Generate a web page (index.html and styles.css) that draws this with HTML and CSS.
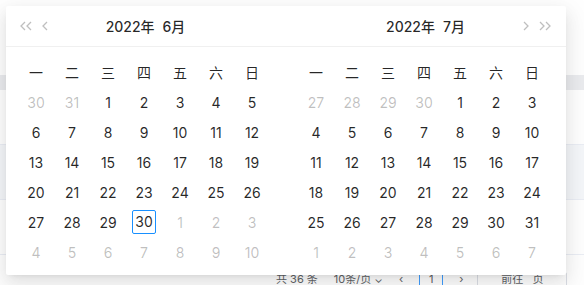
FILE: index.html
```html
<!DOCTYPE html>
<html lang="zh-CN">

<head>
    <meta charset="UTF-8">
    <meta name="viewport" content="width=device-width, initial-scale=1.0">
    <title>日期范围选择</title>
    <link rel="stylesheet" href="styles.css">
</head>

<body>
    <div class="page">
        <div class="table">
            <div class="table-head"></div>
            <div class="table-row"></div>
            <div class="table-row hover"></div>
            <div class="table-row"></div>
        </div>
        <div class="pager">
            <span class="pager-total">共 36 条</span>
            <span class="pager-size">10条/页 ⌄</span>
            <span class="pager-arrow">‹</span>
            <span class="pager-item active">1</span>
            <span class="pager-arrow">›</span>
            <span class="pager-jump">前往 &nbsp; 页</span>
        </div>
    </div>

    <div class="picker-dropdown">
        <div class="panel">
            <div class="panel-header">
                <div class="nav">
                    <button class="nav-btn">
                        <svg width="12" height="10" viewBox="0 0 12 10"><path d="M5 1 1 5l4 4M11 1 7 5l4 4" /></svg>
                    </button>
                    <button class="nav-btn">
                        <svg width="6" height="10" viewBox="0 0 6 10"><path d="M5 1 1 5l4 4" /></svg>
                    </button>
                </div>
                <div class="panel-title"><span>2022年</span><span>6月</span></div>
                <div class="nav"></div>
            </div>
            <div class="panel-body">
                <div class="week">
                    <span>一</span><span>二</span><span>三</span><span>四</span><span>五</span><span>六</span><span>日</span>
                </div>
                <div class="days">
                    <span class="out">30</span><span class="out">31</span><span>1</span><span>2</span><span>3</span><span>4</span><span>5</span>
                    <span>6</span><span>7</span><span>8</span><span>9</span><span>10</span><span>11</span><span>12</span>
                    <span>13</span><span>14</span><span>15</span><span>16</span><span>17</span><span>18</span><span>19</span>
                    <span>20</span><span>21</span><span>22</span><span>23</span><span>24</span><span>25</span><span>26</span>
                    <span>27</span><span>28</span><span>29</span><span class="today"><i>30</i></span><span class="out">1</span><span class="out">2</span><span class="out">3</span>
                    <span class="out">4</span><span class="out">5</span><span class="out">6</span><span class="out">7</span><span class="out">8</span><span class="out">9</span><span class="out">10</span>
                </div>
            </div>
        </div>
        <div class="panel">
            <div class="panel-header">
                <div class="nav"></div>
                <div class="panel-title"><span>2022年</span><span>7月</span></div>
                <div class="nav nav-right">
                    <button class="nav-btn">
                        <svg width="6" height="10" viewBox="0 0 6 10"><path d="M1 1l4 4-4 4" /></svg>
                    </button>
                    <button class="nav-btn">
                        <svg width="12" height="10" viewBox="0 0 12 10"><path d="M1 1l4 4-4 4M7 1l4 4-4 4" /></svg>
                    </button>
                </div>
            </div>
            <div class="panel-body">
                <div class="week">
                    <span>一</span><span>二</span><span>三</span><span>四</span><span>五</span><span>六</span><span>日</span>
                </div>
                <div class="days">
                    <span class="out">27</span><span class="out">28</span><span class="out">29</span><span class="out">30</span><span>1</span><span>2</span><span>3</span>
                    <span>4</span><span>5</span><span>6</span><span>7</span><span>8</span><span>9</span><span>10</span>
                    <span>11</span><span>12</span><span>13</span><span>14</span><span>15</span><span>16</span><span>17</span>
                    <span>18</span><span>19</span><span>20</span><span>21</span><span>22</span><span>23</span><span>24</span>
                    <span>25</span><span>26</span><span>27</span><span>28</span><span>29</span><span>30</span><span>31</span>
                    <span class="out">1</span><span class="out">2</span><span class="out">3</span><span class="out">4</span><span class="out">5</span><span class="out">6</span><span class="out">7</span>
                </div>
            </div>
        </div>
    </div>
</body>

</html>
```

FILE: styles.css
```css
body,
html {
    margin: 0;
    padding: 0;
    height: 100%;
    font-family: Inter, "Noto Sans CJK SC", sans-serif;
    background-color: #fff;
    overflow: hidden;
}

/* page behind the dropdown */
.page {
    padding-top: 75px;
}

.table-head {
    height: 15px;
    background: #ebecef;
}

.table-row {
    height: 54px;
    border-bottom: 1px solid #ebeef5;
}

.table-row.hover {
    background: #f5f7fa;
}

.pager {
    display: flex;
    align-items: flex-start;
    gap: 16px;
    margin-top: 19px;
    padding-left: 276px;
    font-size: 11px;
    line-height: 11px;
    color: #606266;
}

.pager-item,
.pager-jump {
    height: 20px;
    margin-top: -2px;
    border: 1px solid #409eff;
    border-radius: 2px;
    text-align: center;
    line-height: 13px;
}

.pager-item {
    width: 22px;
}

.pager-jump {
    width: 88px;
    margin-left: -2px;
    border-color: #dcdfe6;
}

/* date range dropdown */
.picker-dropdown {
    position: absolute;
    top: 6px;
    left: 6px;
    display: flex;
    background: #fff;
    border-radius: 2px;
    box-shadow: 0 3px 6px -4px rgba(0, 0, 0, 0.12), 0 6px 16px 0 rgba(0, 0, 0, 0.08), 0 9px 28px 8px rgba(0, 0, 0, 0.05);
}

.panel {
    width: 280px;
}

.panel-header {
    display: grid;
    grid-template-columns: 1fr auto 1fr;
    align-items: center;
    height: 40px;
    padding: 0 15px 0 14px;
    border-bottom: 1px solid #f0f0f0;
    color: rgba(0, 0, 0, 0.85);
}

.nav {
    display: flex;
    align-items: center;
    gap: 10px;
}

.nav-right {
    justify-content: flex-end;
}

.nav-btn {
    background: none;
    border: none;
    padding: 0;
    height: 40px;
    display: flex;
    align-items: center;
    cursor: pointer;
}

.nav-btn svg path {
    fill: none;
    stroke: #bfbfbf;
    stroke-width: 1.3;
}

.panel-title {
    display: flex;
    justify-content: center;
    gap: 8px;
    font-size: 14px;
    font-weight: 500;
}

.panel-body {
    padding: 10px 16px 8px 12px;
}

.week,
.days {
    display: grid;
    grid-template-columns: repeat(7, 36px);
}

.week span,
.days span {
    height: 30px;
    display: flex;
    align-items: center;
    justify-content: center;
    font-size: 14px;
    color: rgba(0, 0, 0, 0.85);
}

.days span.out {
    color: rgba(0, 0, 0, 0.25);
}

.days span.today i {
    font-style: normal;
    min-width: 22px;
    height: 22px;
    line-height: 22px;
    text-align: center;
    border: 1px solid #1890ff;
    border-radius: 2px;
}
```
